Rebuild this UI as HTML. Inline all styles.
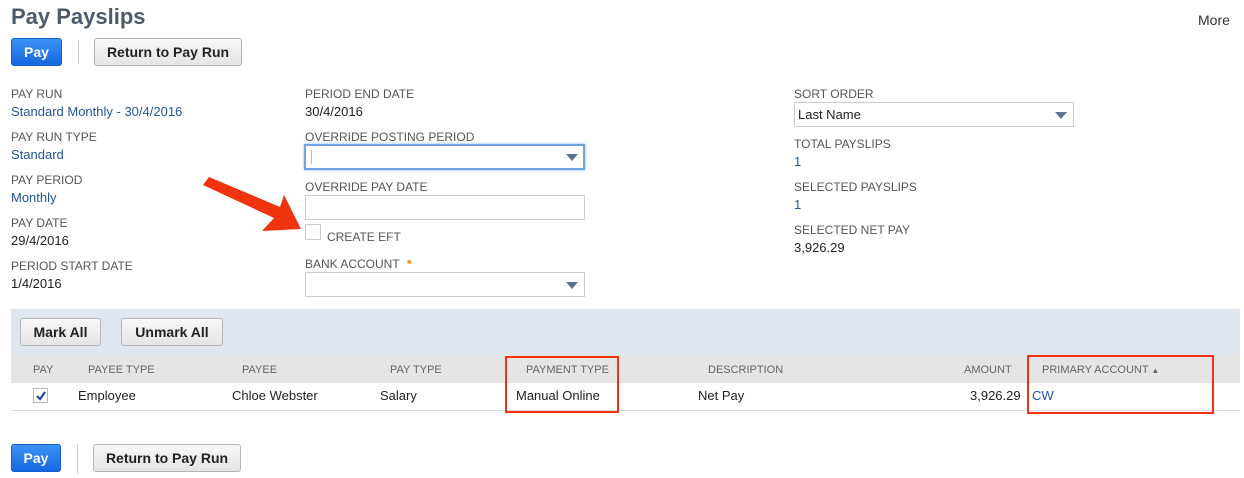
<!DOCTYPE html>
<html><head><style>
body{margin:0;width:1244px;height:478px;background:#fff;font-family:"Liberation Sans",sans-serif;position:relative;overflow:hidden}
.a{position:absolute;white-space:nowrap}
.lbl{font-size:12px;color:#555}
.val{font-size:13px;color:#222}
.lnk{font-size:13px;color:#255599}
.btnb{position:absolute;background:linear-gradient(#3d93f5,#1467e0);border:1px solid #125fc9;border-radius:3px;color:#fff;font-weight:bold;font-size:14px;text-align:center;box-sizing:border-box}
.btng{position:absolute;background:linear-gradient(#f8f8f8,#e4e4e4);border:1px solid #b5b5b5;border-radius:3px;color:#222;font-weight:bold;font-size:14px;text-align:center;box-sizing:border-box}
.inp{position:absolute;border:1px solid #ccc;background:#fff;box-sizing:border-box}
.tri{position:absolute;width:0;height:0;border-left:6px solid transparent;border-right:6px solid transparent;border-top:7px solid #5b7290}
.th{font-size:11px;color:#666}
.td{font-size:13px;color:#222}
</style></head><body>
<div class="a" style="left:11px;top:4px;font-size:22px;font-weight:bold;color:#4d5a6c">Pay Payslips</div>
<div class="a" style="left:1198px;top:12px;font-size:14px;color:#333">More</div>
<div class="btnb" style="left:11px;top:38px;width:51px;height:28px;line-height:26px">Pay</div>
<div class="a" style="left:78px;top:40px;width:1px;height:24px;background:#ccc"></div>
<div class="btng" style="left:94px;top:38px;width:148px;height:28px;line-height:26px">Return to Pay Run</div>

<div class="a lbl" style="left:11px;top:87px">PAY RUN</div>
<div class="a lnk" style="left:11px;top:104px">Standard Monthly - 30/4/2016</div>
<div class="a lbl" style="left:11px;top:130px">PAY RUN TYPE</div>
<div class="a lnk" style="left:11px;top:147px">Standard</div>
<div class="a lbl" style="left:11px;top:173px">PAY PERIOD</div>
<div class="a lnk" style="left:11px;top:190px">Monthly</div>
<div class="a lbl" style="left:11px;top:216px">PAY DATE</div>
<div class="a val" style="left:11px;top:233px">29/4/2016</div>
<div class="a lbl" style="left:11px;top:259px">PERIOD START DATE</div>
<div class="a val" style="left:11px;top:276px">1/4/2016</div>

<div class="a lbl" style="left:305px;top:87px">PERIOD END DATE</div>
<div class="a val" style="left:305px;top:104px">30/4/2016</div>
<div class="a lbl" style="left:305px;top:130px">OVERRIDE POSTING PERIOD</div>
<div class="inp" style="left:304px;top:144px;width:281px;height:26px;border:2px solid #6fa3e6;box-shadow:0 0 3px #8ab6ef"><div class="a" style="left:5px;top:4px;width:1px;height:14px;background:#9bbbe8"></div></div>
<div class="tri" style="left:566px;top:154px"></div>
<div class="a lbl" style="left:305px;top:180px">OVERRIDE PAY DATE</div>
<div class="inp" style="left:305px;top:195px;width:280px;height:25px"></div>
<div class="inp" style="left:305px;top:224px;width:16px;height:16px"></div>
<div class="a lbl" style="left:327px;top:230px">CREATE EFT</div>
<div class="a lbl" style="left:305px;top:257px">BANK ACCOUNT <span style="color:#e08a00;font-weight:bold;margin-left:4px">*</span></div>
<div class="inp" style="left:305px;top:272px;width:280px;height:25px"></div>
<div class="tri" style="left:566px;top:282px"></div>

<svg class="a" style="left:200px;top:175px" width="110" height="60"><polygon points="3,10 9,2 80,32 84,20 101,54 62,56 74,43" fill="#f2330f"/></svg>

<div class="a lbl" style="left:794px;top:87px">SORT ORDER</div>
<div class="inp" style="left:794px;top:102px;width:280px;height:25px"><div class="a val" style="left:3px;top:4px">Last Name</div></div>
<div class="tri" style="left:1055px;top:112px"></div>
<div class="a lbl" style="left:794px;top:137px">TOTAL PAYSLIPS</div>
<div class="a lnk" style="left:794px;top:154px">1</div>
<div class="a lbl" style="left:794px;top:180px">SELECTED PAYSLIPS</div>
<div class="a lnk" style="left:794px;top:197px">1</div>
<div class="a lbl" style="left:794px;top:223px">SELECTED NET PAY</div>
<div class="a val" style="left:794px;top:240px">3,926.29</div>

<div class="a" style="left:11px;top:309px;width:1229px;height:46px;background:#e0e6ef"></div>
<div class="btng" style="left:20px;top:318px;width:81px;height:28px;line-height:26px">Mark All</div>
<div class="btng" style="left:121px;top:318px;width:102px;height:28px;line-height:26px">Unmark All</div>
<div class="a" style="left:11px;top:355px;width:1229px;height:28px;background:#e5e5e5"></div>
<div class="a" style="left:11px;top:383px;width:1229px;height:27px;background:#fff;border-bottom:1px solid #ddd"></div>
<div class="a th" style="left:33px;top:364px">PAY</div>
<div class="a th" style="left:88px;top:364px">PAYEE TYPE</div>
<div class="a th" style="left:242px;top:364px">PAYEE</div>
<div class="a th" style="left:390px;top:364px">PAY TYPE</div>
<div class="a th" style="left:526px;top:364px">PAYMENT TYPE</div>
<div class="a th" style="left:708px;top:364px">DESCRIPTION</div>
<div class="a th" style="left:964px;top:364px">AMOUNT</div>
<div class="a th" style="left:1042px;top:364px">PRIMARY ACCOUNT <span style="font-size:8px">▲</span></div>
<div class="inp" style="left:33px;top:388px;width:15px;height:15px;border-color:#bbb"><svg class="a" style="left:1px;top:1px" width="12" height="12"><path d="M2 6 L5 9 L10 2" stroke="#1d4f9c" stroke-width="2.2" fill="none"/></svg></div>
<div class="a td" style="left:78px;top:388px">Employee</div>
<div class="a td" style="left:232px;top:388px">Chloe Webster</div>
<div class="a td" style="left:380px;top:388px">Salary</div>
<div class="a td" style="left:516px;top:388px">Manual Online</div>
<div class="a td" style="left:698px;top:388px">Net Pay</div>
<div class="a td" style="left:970px;top:388px">3,926.29</div>
<div class="a" style="left:1032px;top:388px;font-size:13px;color:#255599">CW</div>
<div class="a" style="left:505px;top:356px;width:110px;height:53px;border:2px solid #f2330f"></div>
<div class="a" style="left:1027px;top:355px;width:183px;height:55px;border:2px solid #f2330f"></div>

<div class="btnb" style="left:11px;top:444px;width:50px;height:28px;line-height:26px">Pay</div>
<div class="a" style="left:77px;top:444px;width:1px;height:30px;background:#ccc"></div>
<div class="btng" style="left:93px;top:444px;width:148px;height:28px;line-height:26px">Return to Pay Run</div>
</body></html>
